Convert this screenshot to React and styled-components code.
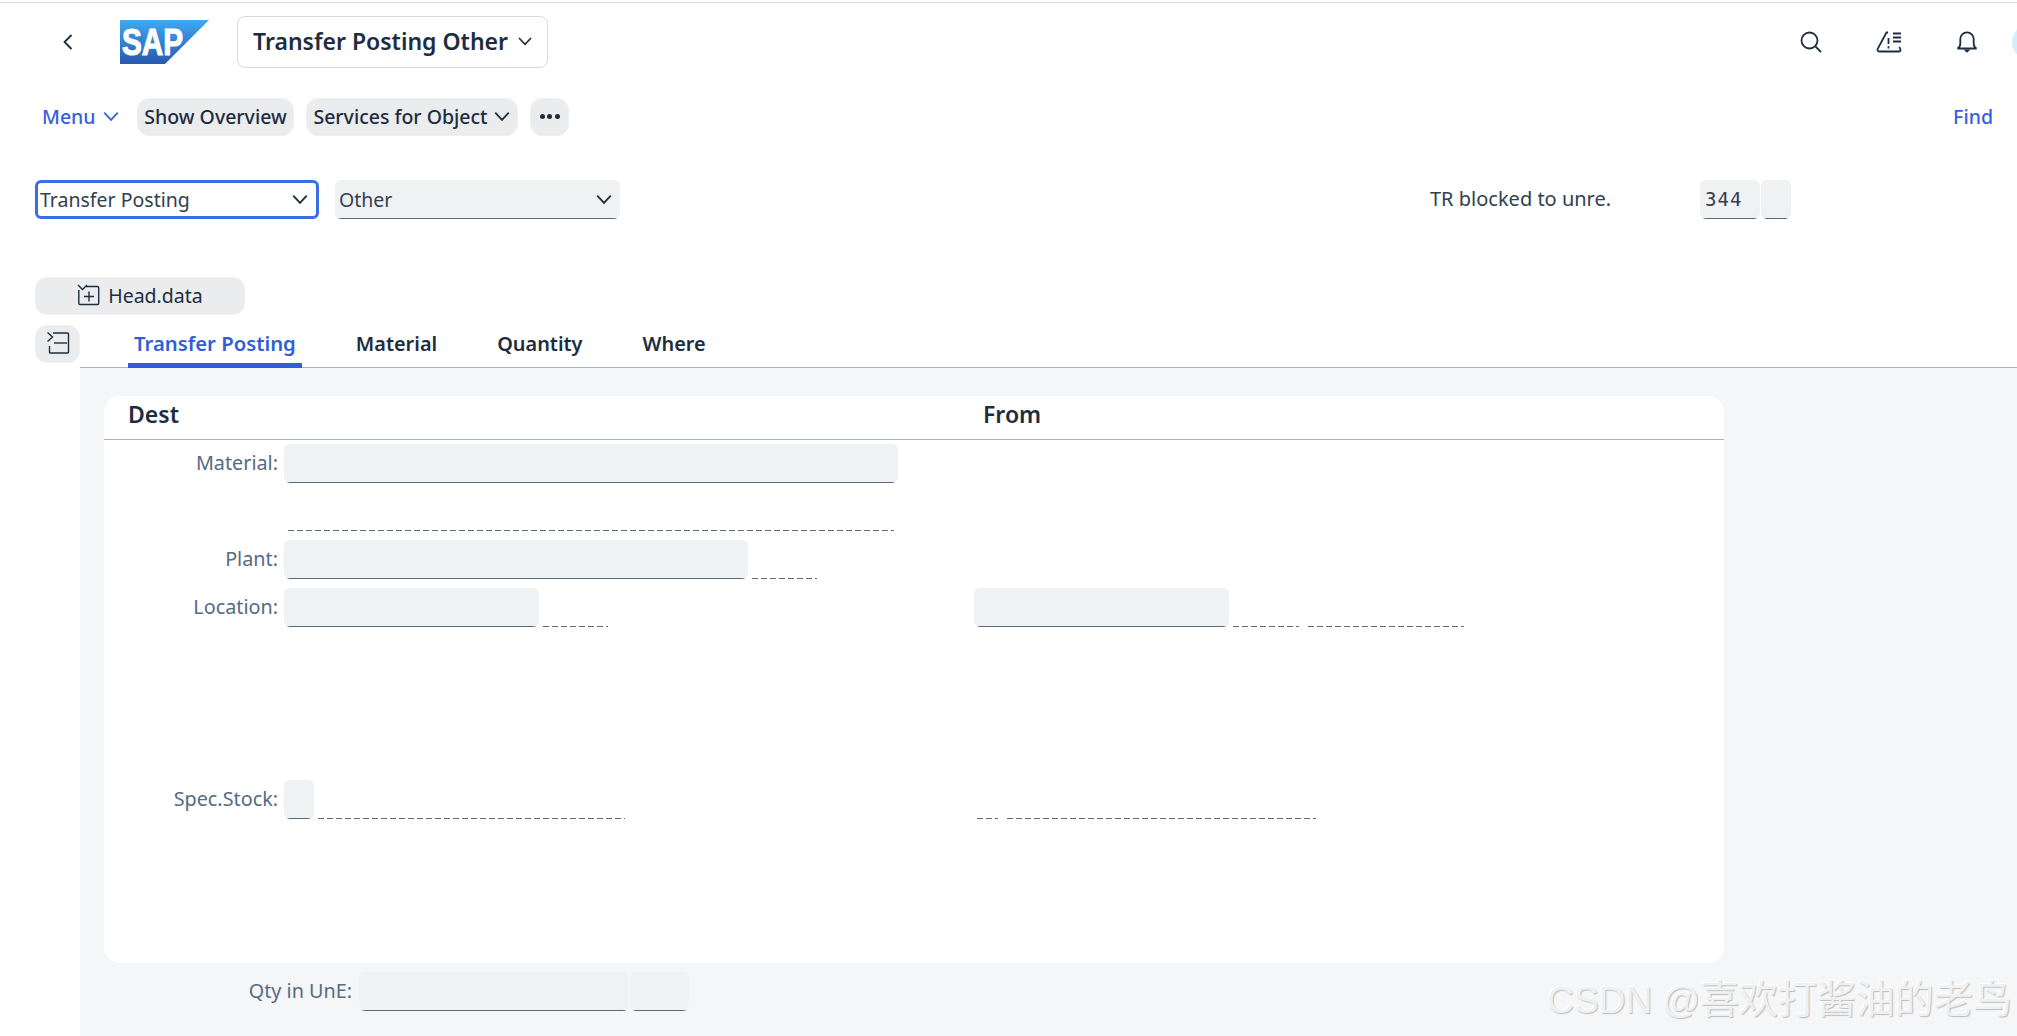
import React from "react";
import styled, { createGlobalStyle } from "styled-components";

const FONT = `"Noto Sans", "Open Sans", sans-serif`;
const INK = "#1d2d3e";
const BLUE = "#3560dc";
const SLATE = "#556b82";

const GlobalStyle = createGlobalStyle`
  html, body {
    margin: 0;
    padding: 0;
    background: #fff;
    font-family: ${FONT};
    color: ${INK};
  }
`;

const Chevron = ({ size = 14, color = INK, width = 1.6 }) => (
  <svg width={size} height={size} viewBox="0 0 16 16" fill="none">
    <path d="M2 5l6 6.4L14 5" stroke={color} strokeWidth={width} />
  </svg>
);

const SapLogo = () => (
  <svg width="89" height="44" viewBox="0 0 89 44">
    <defs>
      <linearGradient id="sapFill" x1="0" y1="0" x2="0" y2="1">
        <stop offset="0" stopColor="#3fa9f2" />
        <stop offset="1" stopColor="#2859ad" />
      </linearGradient>
    </defs>
    <polygon points="0,0 89,0 45,44 0,44" fill="url(#sapFill)" />
    <text
      x="2"
      y="35"
      fontFamily='"Liberation Sans", sans-serif'
      fontWeight="700"
      fontSize="37"
      fill="#fff"
      stroke="#fff"
      strokeWidth="1.2"
      textLength="61"
      lengthAdjust="spacingAndGlyphs"
    >
      SAP
    </text>
  </svg>
);

const SearchIcon = () => (
  <svg width="24" height="24" viewBox="0 0 24 24" fill="none" stroke={INK} strokeWidth="1.8">
    <circle cx="10.5" cy="10.5" r="8" />
    <path d="M16.4 16.4l5.6 5.6" />
  </svg>
);

const AlertListIcon = () => (
  <svg width="26" height="24" viewBox="0 0 26 24" fill="none" stroke={INK} strokeWidth="1.8">
    <path d="M12 2.5h-1.5L1.8 18.6c-.9 1.6.1 2.9 1.6 2.9h19.4c1.4 0 2.2-1.2 1.4-2.7l-.9-1.8" />
    <path d="M12.5 8v6M12.5 16.2v2.4" />
    <path d="M17 3.5h8M17 7.5h8M17 11.5h8" />
  </svg>
);

const BellIcon = () => (
  <svg width="24" height="24" viewBox="0 0 24 24" fill="none" stroke={INK} strokeWidth="1.8">
    <path d="M2.5 18.5c2-1 2.8-2.6 2.8-5V9a6.7 6.7 0 0 1 13.4 0v4.5c0 2.4.8 4 2.8 5z" />
    <path d="M8.5 19.5h7l-3.5 3.3z" fill={INK} stroke="none" />
  </svg>
);

const ExpandIcon = () => (
  <svg width="23" height="22" viewBox="0 0 23 22" fill="none" stroke={INK} strokeWidth="1.4">
    <path d="M1 1l4.5 4.5L10 1" />
    <path d="M9 2.5h11.5a1.2 1.2 0 0 1 1.2 1.2v15.6a1.2 1.2 0 0 1-1.2 1.2H3a1.2 1.2 0 0 1-1.2-1.2V6" />
    <path d="M7 12.5h10M12 7.5v10" />
  </svg>
);

const CollapseIcon = () => (
  <svg width="24" height="24" viewBox="0 0 24 24" fill="none" stroke={INK} strokeWidth="1.4">
    <path d="M1.5 1.5l5 4.5-5 4.5" />
    <path d="M7 2h14.5a1 1 0 0 1 1 1v18a1 1 0 0 1-1 1H4.5a1 1 0 0 1-1-1v-6" />
    <path d="M8 12h13" />
  </svg>
);

const App = () => {
  return (
    <>
      <GlobalStyle />
      <Page>
        <TopRule />
        <Header>
          <BackButton>
            <svg width="12" height="16" viewBox="0 0 12 16" fill="none">
              <path d="M9.5 1L2.5 8l7 7" stroke={INK} strokeWidth="1.8" />
            </svg>
          </BackButton>
          <SapLogo />
          <TitleButton>
            Transfer Posting Other
            <Chevron size={16} />
          </TitleButton>
          <HeaderActions>
            <SearchIcon />
            <AlertListIcon />
            <BellIcon />
            <Avatar />
          </HeaderActions>
        </Header>

        <Toolbar>
          <MenuLink>
            Menu
            <Chevron size={18} color={BLUE} />
          </MenuLink>
          <ToolButton $width={157}>Show Overview</ToolButton>
          <ToolButton $width={212}>
            Services for Object
            <Chevron size={18} />
          </ToolButton>
          <ToolButton $width={39}>
            <Dots>
              <i />
              <i />
              <i />
            </Dots>
          </ToolButton>
          <FindLink>Find</FindLink>
        </Toolbar>

        <SelectRow>
          <Select $focused $width={284}>
            Transfer Posting
            <Chevron size={18} />
          </Select>
          <Select $width={285}>
            Other
            <Chevron size={18} />
          </Select>
          <ReasonLabel>TR blocked to unre.</ReasonLabel>
          <MoveType>344</MoveType>
          <Input $width={30} />
        </SelectRow>

        <HeadButton>
          <ExpandIcon />
          Head.data
        </HeadButton>

        <Body>
          <SideColumn>
            <CollapseButton>
              <CollapseIcon />
            </CollapseButton>
          </SideColumn>
          <Main>
            <TabBar>
              <Tab $active>Transfer Posting</Tab>
              <Tab>Material</Tab>
              <Tab>Quantity</Tab>
              <Tab>Where</Tab>
            </TabBar>
            <Content>
              <Card>
                <CardHead>
                  <CardTitle $width={855}>Dest</CardTitle>
                  <CardTitle>From</CardTitle>
                </CardHead>
                <CardBody>
                  <Row>
                    <Label>Material:</Label>
                    <Cluster>
                      <Input $width={614} />
                    </Cluster>
                  </Row>
                  <Row>
                    <span />
                    <Cluster $inset={4}>
                      <Dash $width={606} />
                    </Cluster>
                  </Row>
                  <Row>
                    <Label>Plant:</Label>
                    <Cluster>
                      <Input $width={464} />
                      <Dash $width={65} />
                    </Cluster>
                  </Row>
                  <Row>
                    <Label>Location:</Label>
                    <Cluster>
                      <Input $width={255} />
                      <Dash $width={65} />
                    </Cluster>
                    <Cluster>
                      <Input $width={255} />
                      <Dash $width={66} />
                      <Dash $width={156} $gap={5} />
                    </Cluster>
                  </Row>
                  <Row />
                  <Row />
                  <Row />
                  <Row>
                    <Label>Spec.Stock:</Label>
                    <Cluster>
                      <Input $width={30} />
                      <Dash $width={307} />
                    </Cluster>
                    <Cluster $inset={3}>
                      <Dash $width={21} />
                      <Dash $width={309} $gap={5} />
                    </Cluster>
                  </Row>
                </CardBody>
              </Card>
              <QtyRow>
                <QtyLabel>Qty in UnE:</QtyLabel>
                <Input $width={270} />
                <Input $width={59} />
              </QtyRow>
            </Content>
          </Main>
        </Body>
        <Watermark>
          <small>CSDN @</small>喜欢打酱油的老鸟
        </Watermark>
      </Page>
    </>
  );
};

export default App;

const Page = styled.div`
  position: relative;
  width: 2017px;
  height: 1036px;
  overflow: hidden;
  display: flex;
  flex-direction: column;
  font-size: 19.5px;
`;
const TopRule = styled.div`
  height: 1px;
  margin-top: 2px;
  background: #dcdcdc;
  flex: none;
`;
const Header = styled.div`
  height: 78px;
  flex: none;
  display: flex;
  align-items: center;
  padding-left: 120px;
`;
const BackButton = styled.div`
  display: flex;
  margin-left: -58px;
  width: 58px;
`;
const TitleButton = styled.div`
  height: 52px;
  width: 311px;
  box-sizing: border-box;
  margin-left: 28px;
  padding: 0 14px 3px 15px;
  border: 1px solid #d5dadd;
  border-radius: 8px;
  display: flex;
  align-items: center;
  justify-content: space-between;
  font-size: 23px;
  font-weight: 600;
  white-space: nowrap;
`;
const HeaderActions = styled.div`
  margin-left: auto;
  display: flex;
  align-items: center;
  gap: 53px;
  margin-right: -31px;
`;
const Avatar = styled.div`
  width: 36px;
  height: 36px;
  margin-left: -20px;
  border-radius: 50%;
  background: #d1efff;
`;
const Toolbar = styled.div`
  flex: none;
  height: 38px;
  margin-top: 17px;
  padding: 0 24px 0 42px;
  display: flex;
  align-items: center;
  gap: 12px;
`;
const MenuLink = styled.div`
  width: 83px;
  display: flex;
  align-items: center;
  gap: 6px;
  color: ${BLUE};
  font-weight: 500;
  padding-bottom: 2px;
`;
const ToolButton = styled.div`
  width: ${(p) => p.$width}px;
  height: 38px;
  box-sizing: border-box;
  background: #eaecee;
  border: 1px solid #eef0f2;
  border-radius: 12px;
  padding-bottom: 2px;
  display: flex;
  align-items: center;
  justify-content: center;
  gap: 5px;
  font-weight: 500;
  white-space: nowrap;
`;
const Dots = styled.div`
  display: flex;
  gap: 2.5px;
  & > i {
    width: 5px;
    height: 5px;
    border-radius: 50%;
    background: ${INK};
  }
`;
const FindLink = styled.div`
  margin-left: auto;
  color: ${BLUE};
  font-weight: 500;
  padding-bottom: 2px;
`;
const SelectRow = styled.div`
  flex: none;
  height: 39px;
  margin-top: 44px;
  padding-left: 35px;
  display: flex;
  align-items: stretch;
`;
const Select = styled.div`
  width: ${(p) => p.$width}px;
  box-sizing: border-box;
  margin-right: 16px;
  padding: 0 7px 1px 2px;
  display: flex;
  align-items: center;
  justify-content: space-between;
  border-radius: 6px;
  color: #32404f;
  ${(p) =>
    p.$focused
      ? `border: 3px solid #3a6ee8; background: #fff;`
      : `padding-left: 4px; margin-right: 0; background: linear-gradient(${SLATE}, ${SLATE}) bottom / calc(100% - 4px) 1px no-repeat, #eff1f3;`}
`;
const ReasonLabel = styled.div`
  margin-left: 810px;
  width: 270px;
  display: flex;
  align-items: center;
  padding-bottom: 2px;
  font-size: 20px;
  color: #32404f;
`;
const Input = styled.div`
  width: ${(p) => p.$width}px;
  height: 39px;
  flex: none;
  border-radius: 6px;
  background: linear-gradient(${SLATE}, ${SLATE}) bottom / calc(100% - 6px) 1px no-repeat, #eff1f3;
`;
const MoveType = styled(Input).attrs({ $width: 60 })`
  margin-right: 1px;
  padding: 0 0 1px 5px;
  box-sizing: border-box;
  display: flex;
  align-items: center;
  font-family: "DejaVu Sans Mono", monospace;
  font-size: 19px;
  letter-spacing: 1px;
  color: #32404f;
`;
const HeadButton = styled(ToolButton)`
  width: 210px;
  flex: none;
  margin: 58px 0 0 35px;
  gap: 8px;
  font-weight: 400;
`;
const Body = styled.div`
  flex: 1;
  min-height: 0;
  margin-top: 10px;
  padding-left: 35px;
  display: flex;
`;
const SideColumn = styled.div`
  width: 45px;
  flex: none;
`;
const CollapseButton = styled(ToolButton)`
  width: 45px;
`;
const Main = styled.div`
  flex: 1;
  display: flex;
  flex-direction: column;
`;
const TabBar = styled.div`
  height: 43px;
  flex: none;
  box-sizing: border-box;
  padding-left: 48px;
  display: flex;
  gap: 48px;
  border-bottom: 1px solid #a9b4be;
`;
const Tab = styled.div`
  padding: 0 6px;
  height: 43px;
  box-sizing: border-box;
  display: flex;
  align-items: center;
  font-weight: 600;
  font-size: ${(p) => (p.$active ? "20.3px" : "19.9px")};
  color: ${(p) => (p.$active ? "#2f5fd8" : INK)};
  border-bottom: ${(p) => (p.$active ? "5px solid #2f5fd8" : "0")};
  padding-bottom: ${(p) => (p.$active ? "2px" : "7px")};
`;
const Content = styled.div`
  flex: 1;
  background: #f5f6f7;
  padding: 28px 0 0 24px;
`;
const Card = styled.div`
  width: 1620px;
  height: 567px;
  background: #fff;
  border-radius: 16px;
`;
const CardHead = styled.div`
  height: 44px;
  box-sizing: border-box;
  padding: 0 0 8px 24px;
  display: flex;
  align-items: center;
  border-bottom: 1px solid #a9b4be;
`;
const CardTitle = styled.div`
  width: ${(p) => (p.$width ? `${p.$width}px` : "auto")};
  font-size: 23px;
  font-weight: 600;
`;
const CardBody = styled.div`
  padding-top: 4px;
`;
const Row = styled.div`
  height: 48px;
  display: grid;
  grid-template-columns: 180px 690px 1fr;
  align-items: start;
`;
const Label = styled.div`
  height: 39px;
  padding: 0 6px 3px 0;
  box-sizing: border-box;
  display: flex;
  align-items: center;
  justify-content: flex-end;
  font-size: 19.8px;
  color: ${SLATE};
`;
const Cluster = styled.div`
  display: flex;
  gap: 4px;
  padding-left: ${(p) => p.$inset || 0}px;
`;
const Dash = styled.div`
  width: ${(p) => p.$width}px;
  height: 39px;
  margin-left: ${(p) => p.$gap || 0}px;
  background: repeating-linear-gradient(to right, ${SLATE} 0 6px, transparent 6px 9px) 0 38px / 100% 1px no-repeat;
`;
const QtyRow = styled.div`
  margin-top: 9px;
  display: flex;
  align-items: center;
  gap: 1px;
`;
const QtyLabel = styled.div`
  width: 248px;
  margin-right: 6px;
  padding-bottom: 2px;
  text-align: right;
  font-size: 19.8px;
  color: ${SLATE};
`;
const Watermark = styled.div`
  position: absolute;
  right: 5px;
  bottom: 12px;
  font-family: "Liberation Sans", "Noto Sans CJK SC", sans-serif;
  font-size: 39px;
  line-height: 46px;
  color: #eff0f1;
  text-shadow: 1px 1px 1px #bdbdbd, -1px -1px 0 #fff;
  white-space: nowrap;
  & > small {
    font-size: 37px;
  }
`;
